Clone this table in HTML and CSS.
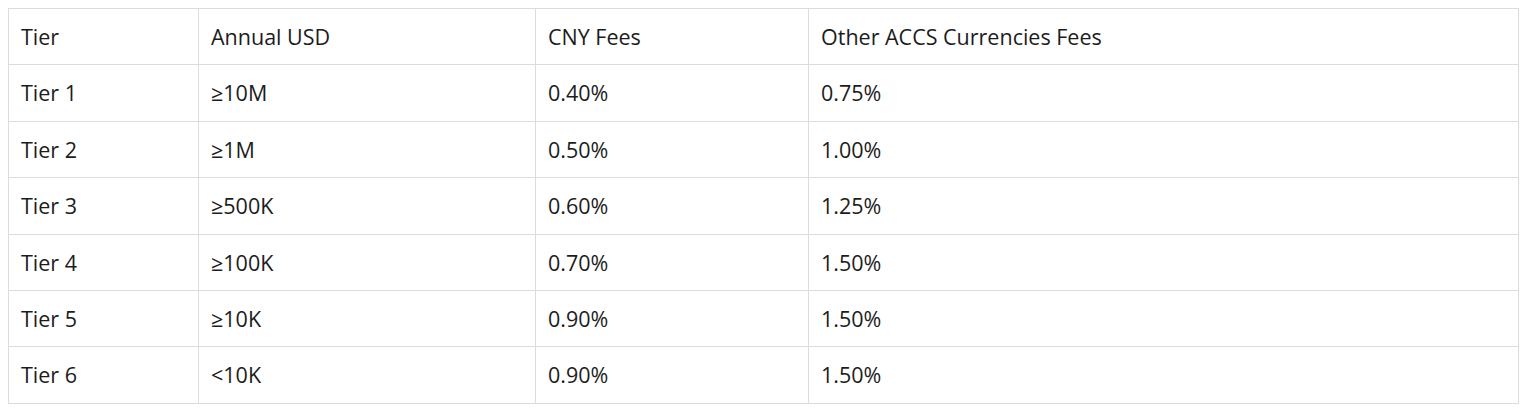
FILE: index.html
```html
<!DOCTYPE html>
<html>
<head>
<meta charset="utf-8">
<link rel="stylesheet" href="styles.css">
</head>
<body>
<table class="fees">
  <colgroup>
    <col class="c1"><col class="c2"><col class="c3"><col class="c4">
  </colgroup>
  <tr><td>Tier</td><td>Annual USD</td><td>CNY Fees</td><td>Other ACCS Currencies Fees</td></tr>
  <tr><td>Tier 1</td><td>≥10M</td><td>0.40%</td><td>0.75%</td></tr>
  <tr><td>Tier 2</td><td>≥1M</td><td>0.50%</td><td>1.00%</td></tr>
  <tr><td>Tier 3</td><td>≥500K</td><td>0.60%</td><td>1.25%</td></tr>
  <tr><td>Tier 4</td><td>≥100K</td><td>0.70%</td><td>1.50%</td></tr>
  <tr><td>Tier 5</td><td>≥10K</td><td>0.90%</td><td>1.50%</td></tr>
  <tr><td>Tier 6</td><td>&lt;10K</td><td>0.90%</td><td>1.50%</td></tr>
</table>
</body>
</html>
```

FILE: styles.css
```css
html, body {
  margin: 0;
  background: #ffffff;
}
body {
  padding: 8px;
  font-family: "Open Sans", "Noto Sans", sans-serif;
  color: #1c1c1c;
}
.fees {
  border-collapse: collapse;
  width: 1511px;
  table-layout: fixed;
  font-size: 21.5px;
}
.c1 { width: 190px; }
.c2 { width: 337px; }
.c3 { width: 273px; }
.c4 { width: auto; }
.fees td {
  border: 1px solid #dcdcdc;
  padding: 15px 12px;
  line-height: 25.4px;
  height: 25.4px;
  vertical-align: middle;
  white-space: nowrap;
}
```
